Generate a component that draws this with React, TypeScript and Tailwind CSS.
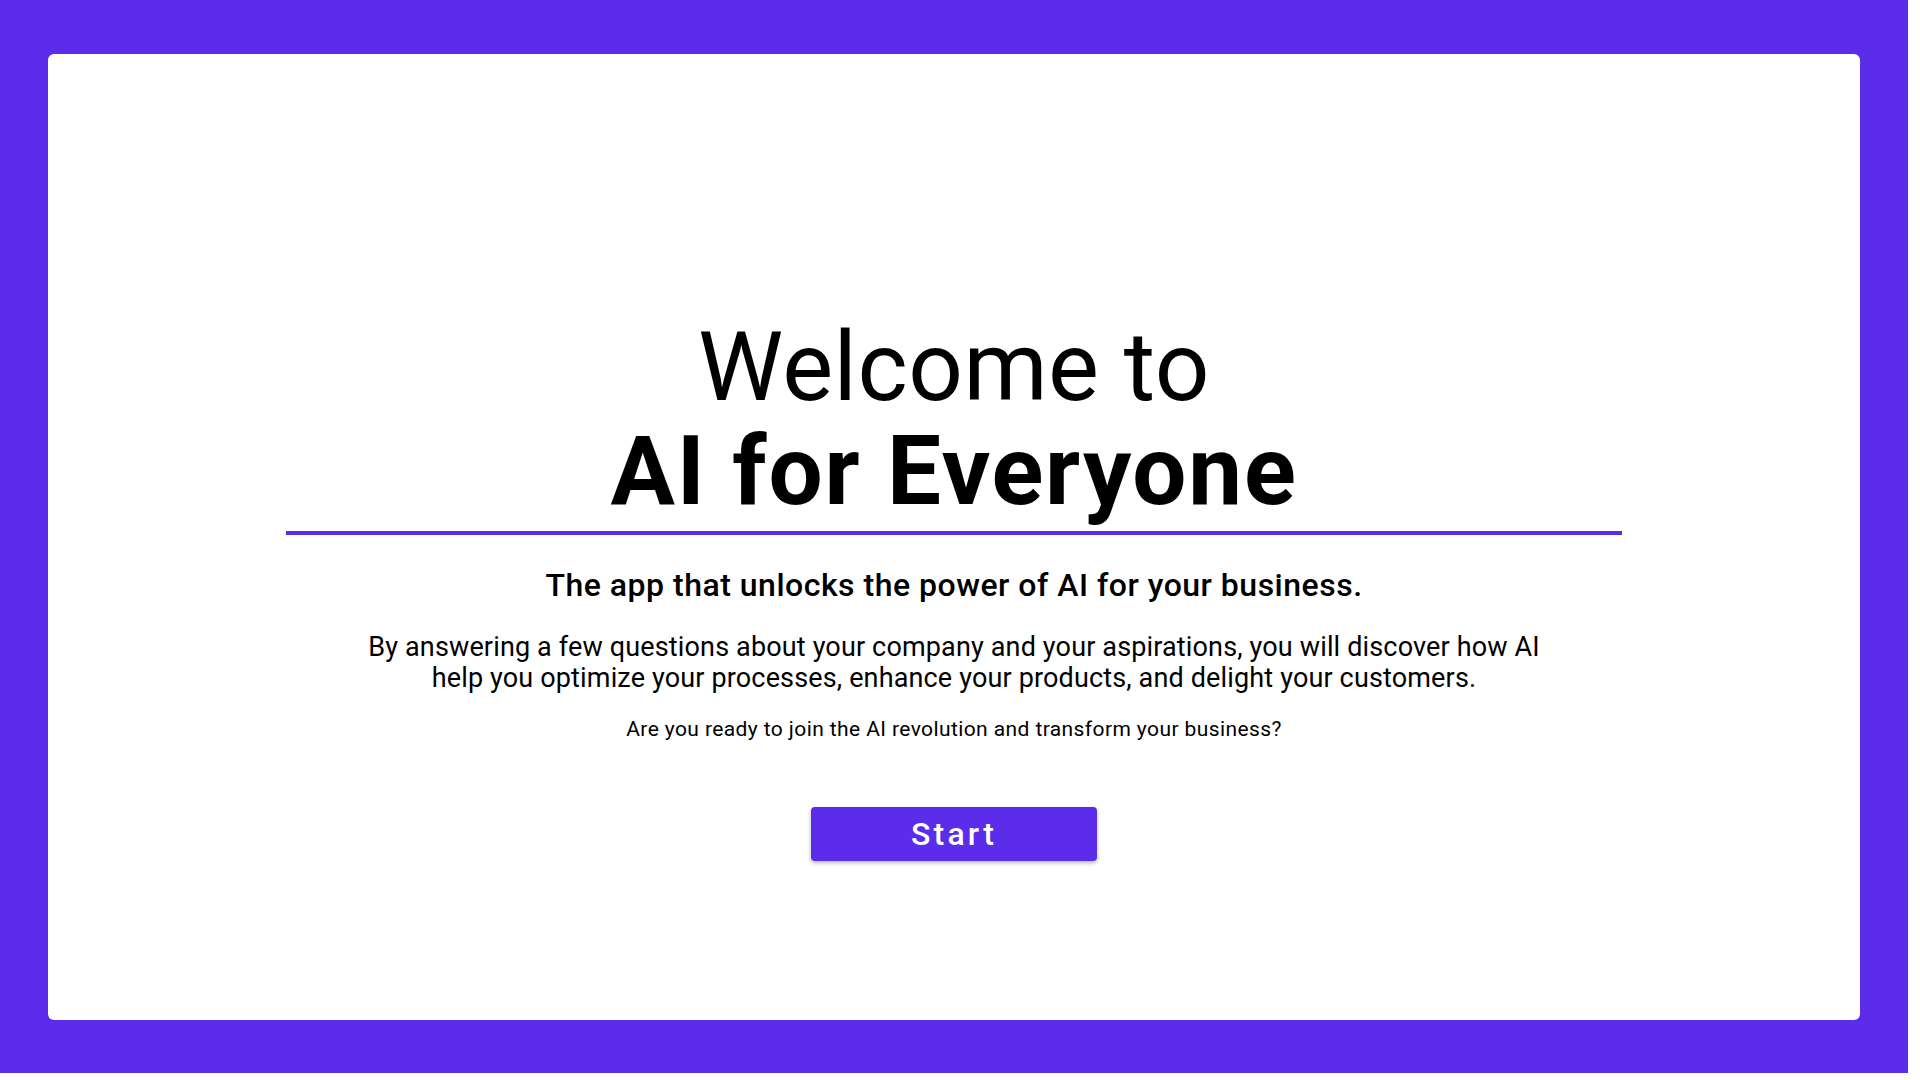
export default function App() {
  return (
    <div className="w-[1908px] h-[1073px] bg-[#5b2ce9] pt-[54px] pl-[48px] font-['Roboto','Liberation_Sans',sans-serif] text-black">
      <div className="w-[1812px] h-[966px] bg-white rounded-[6px] flex flex-col items-center pt-[261px]">
        <h1 className="text-center">
          <span className="block text-[96px] leading-[104px] font-normal tracking-[0.5px]">Welcome to</span>
          <span className="block text-[96px] leading-[104px] font-bold tracking-[1.8px]">AI for Everyone</span>
        </h1>
        <div className="mt-[8px] h-[4px] w-[1336px] bg-[#5b2ce9]" />
        <h2 className="mt-[30px] text-[32px] leading-[40px] font-medium tracking-[0.5px]">
          The app that unlocks the power of AI for your business.
        </h2>
        <p className="mt-[27px] w-[1200px] text-center text-[27px] leading-[31px] tracking-[0.15px]">
          By answering a few questions about your company and your aspirations, you will discover how AI help you optimize your processes, enhance your products, and delight your customers.
        </p>
        <p className="mt-[23px] text-[21px] leading-[24px] tracking-[0.4px]">
          Are you ready to join the AI revolution and transform your business?
        </p>
        <button
          type="button"
          className="mt-[66px] w-[286px] h-[54px] rounded-[4px] bg-[#5b2ce9] text-white text-[32px] font-medium tracking-[0.1em] shadow-[0_2px_4px_rgba(0,0,0,0.3)]"
        >
          Start
        </button>
      </div>
    </div>
  );
}
